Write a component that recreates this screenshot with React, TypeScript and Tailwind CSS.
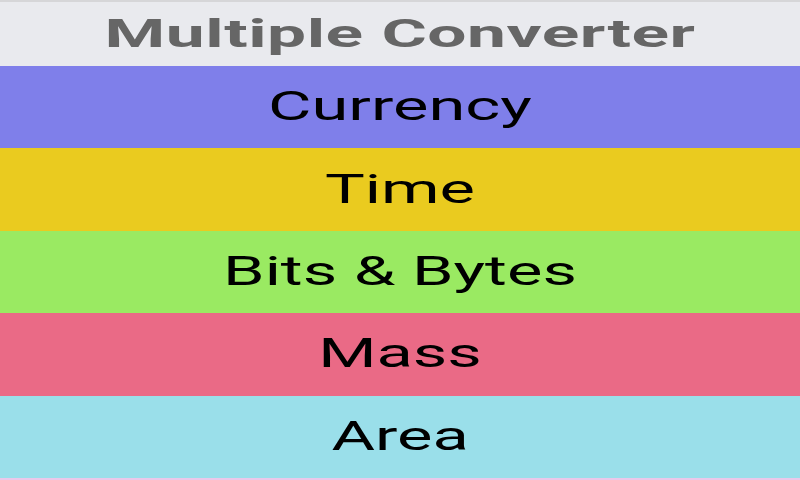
import React from 'react';

const items = [
  { label: 'Currency', bg: 'bg-[#7f7fea]' },
  { label: 'Time', bg: 'bg-[#eacb1f]' },
  { label: 'Bits & Bytes', bg: 'bg-[#9aea62]' },
  { label: 'Mass', bg: 'bg-[#ea6a86]' },
  { label: 'Area', bg: 'bg-[#9adfea]' },
];

export default function App() {
  return (
    <div className="w-[800px] h-[480px] overflow-hidden flex flex-col font-['Roboto',sans-serif]">
      {/* Title bar */}
      <div className="h-[66px] shrink-0 bg-[#e9eaee] border-t-2 border-[#d6d6d8] flex items-center justify-center">
        <h1 className="text-[39px] font-bold text-[#666666] scale-x-[1.78] tracking-[0.3px]">
          Multiple Converter
        </h1>
      </div>

      {/* Converter list */}
      {items.map((item) => (
        <div
          key={item.label}
          className={`h-[82.4px] shrink-0 flex items-center justify-center ${item.bg}`}
        >
          <span className="text-[40px] text-black scale-x-[1.67]">{item.label}</span>
        </div>
      ))}

      {/* next item, scrolled just into view */}
      <div className="flex-1 bg-[#eac8ea]" />
    </div>
  );
}
